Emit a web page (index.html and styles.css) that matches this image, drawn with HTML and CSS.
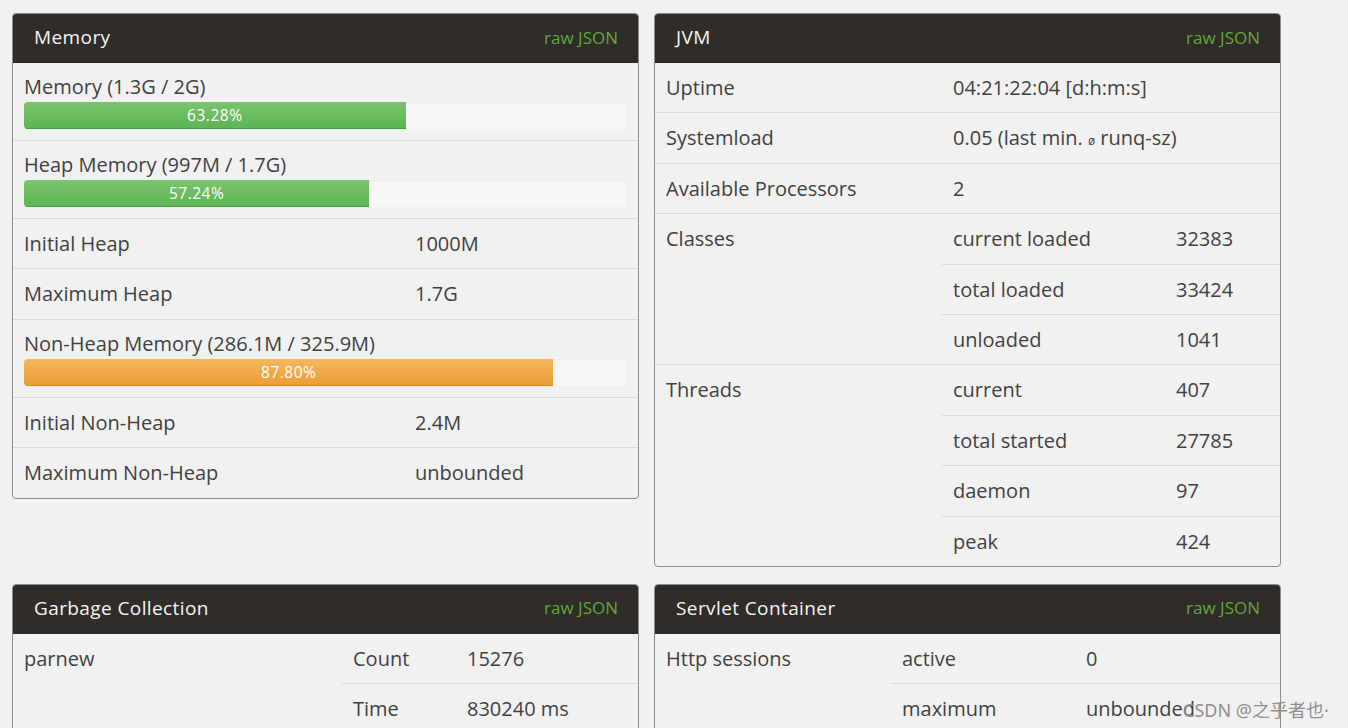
FILE: index.html
```html
<!doctype html>
<html lang="en">

<head>
    <meta charset="utf-8">
    <title>Details</title>
    <link rel="stylesheet" href="styles.css">
</head>

<body>
<div id="main">
    <div class="card">
        <div class="card-head">
            <span class="title">Memory</span>
            <a class="raw" href="#">raw JSON</a>
        </div>
        <table class="grid mem">
            <colgroup><col class="mc1"><col></colgroup>
            <tr>
                <td colspan="2" class="bar-cell">
                    Memory (1.3G / 2G)
                    <div class="progress"><div class="fill green" style="width: 63.28%">63.28%</div></div>
                </td>
            </tr>
            <tr>
                <td colspan="2" class="bar-cell">
                    Heap Memory (997M / 1.7G)
                    <div class="progress"><div class="fill green" style="width: 57.24%">57.24%</div></div>
                </td>
            </tr>
            <tr><td>Initial Heap</td><td>1000M</td></tr>
            <tr><td>Maximum Heap</td><td>1.7G</td></tr>
            <tr>
                <td colspan="2" class="bar-cell">
                    Non-Heap Memory (286.1M / 325.9M)
                    <div class="progress"><div class="fill orange" style="width: 87.80%">87.80%</div></div>
                </td>
            </tr>
            <tr><td>Initial Non-Heap</td><td>2.4M</td></tr>
            <tr><td>Maximum Non-Heap</td><td>unbounded</td></tr>
        </table>
    </div>

    <div class="card">
        <div class="card-head">
            <span class="title">JVM</span>
            <a class="raw" href="#">raw JSON</a>
        </div>
        <table class="grid jvm">
            <tr><td class="c1">Uptime</td><td>04:21:22:04 [d:h:m:s]</td></tr>
            <tr><td>Systemload</td><td>0.05 (last min. <span class="avg">&#248;</span> runq-sz)</td></tr>
            <tr><td>Available Processors</td><td>2</td></tr>
            <tr>
                <td>Classes</td>
                <td class="sub">
                    <table class="nested">
                        <tr><td class="s1">current loaded</td><td>32383</td></tr>
                        <tr><td>total loaded</td><td>33424</td></tr>
                        <tr><td>unloaded</td><td>1041</td></tr>
                    </table>
                </td>
            </tr>
            <tr>
                <td>Threads</td>
                <td class="sub">
                    <table class="nested">
                        <tr><td class="s1">current</td><td>407</td></tr>
                        <tr><td>total started</td><td>27785</td></tr>
                        <tr><td>daemon</td><td>97</td></tr>
                        <tr><td>peak</td><td>424</td></tr>
                    </table>
                </td>
            </tr>
        </table>
    </div>

    <div class="card">
        <div class="card-head">
            <span class="title">Garbage Collection</span>
            <a class="raw" href="#">raw JSON</a>
        </div>
        <table class="grid gc">
            <tr>
                <td class="c1">parnew</td>
                <td class="sub">
                    <table class="nested">
                        <tr><td class="s1">Count</td><td>15276</td></tr>
                        <tr><td>Time</td><td>830240 ms</td></tr>
                    </table>
                </td>
            </tr>
        </table>
    </div>

    <div class="card">
        <div class="card-head">
            <span class="title">Servlet Container</span>
            <a class="raw" href="#">raw JSON</a>
        </div>
        <table class="grid servlet">
            <tr>
                <td class="c1">Http sessions</td>
                <td class="sub">
                    <table class="nested">
                        <tr><td class="s1">active</td><td>0</td></tr>
                        <tr><td>maximum</td><td>unbounded</td></tr>
                    </table>
                </td>
            </tr>
        </table>
    </div>
</div>
<div class="mark">CSDN @之乎者也·</div>
</body>

</html>
```

FILE: styles.css
```css
html, body {
    margin: 0;
    background: #f1f1f1;
    height: 100%;
    overflow: hidden;
}

body {
    font-family: "Open Sans", "Noto Sans", sans-serif;
    font-size: 20px;
    color: #414141;
}

#main {
    display: grid;
    grid-template-columns: 627px 627px;
    column-gap: 15px;
    row-gap: 17px;
    align-items: start;
    padding: 13px 0 0 12px;
}

.card {
    border: 1px solid #8c8c8c;
    border-radius: 4px;
    overflow: hidden;
    background: #f1f1f1;
}

.card-head {
    background: #302c29;
    height: 49px;
    display: flex;
    align-items: center;
    justify-content: space-between;
    padding: 0 20px 3px 21px;
    box-sizing: border-box;
}

.title {
    color: #f4f4f4;
    font-size: 19px;
    letter-spacing: 0.4px;
}

.raw {
    color: #62a83a;
    font-size: 17px;
    text-decoration: none;
}

.grid, .nested {
    width: 100%;
    border-collapse: collapse;
    table-layout: fixed;
}

.grid td, .nested td {
    padding: 12px 11px 12px 11px;
    line-height: 25px;
    height: 25.4px;
    vertical-align: top;
    white-space: nowrap;
}

.grid > tbody > tr + tr > td {
    border-top: 1px solid #dadada;
}

.nested tr + tr td {
    border-top: 1px solid #dadada;
}

.grid td.sub {
    padding: 0;
}

.mc1 { width: 391px; }
.jvm .c1 { width: 265px; }
.gc .c1 { width: 307px; }
.servlet .c1 { width: 214px; }

.jvm .s1 { width: 201px; }
.gc .s1 { width: 92px; }
.servlet .s1 { width: 162px; }

.grid td.bar-cell {
    padding: 12px 11px 11px 11px;
    line-height: 24px;
}

.progress {
    margin-top: 3px;
    height: 27px;
    background: #f7f7f7;
    border-radius: 4px;
    box-shadow: inset 0 1px 2px rgba(0, 0, 0, 0.06);
    overflow: hidden;
}

.fill {
    height: 100%;
    color: #ffffff;
    font-size: 15.5px;
    letter-spacing: 0.5px;
    line-height: 27px;
    text-align: center;
}

.green {
    background: linear-gradient(#7cc46f, #5bb452);
    box-shadow: inset 0 -1px 0 #4f9a48;
}

.orange {
    background: linear-gradient(#f3b65f, #eb9e34);
    box-shadow: inset 0 -1px 0 #d98b22;
}

.avg {
    font-size: 12px;
    line-height: 1;
    vertical-align: baseline;
}

.mark {
    position: absolute;
    left: 1183px;
    top: 696px;
    font-family: "Noto Sans", "Noto Sans CJK SC", sans-serif;
    font-size: 18px;
    color: #8f8f8f;
}
```
